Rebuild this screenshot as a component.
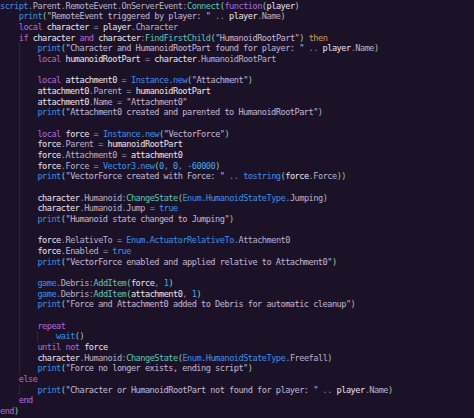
import React from "react";

const lines = [
  [0, 'script.Parent.RemoteEvent.OnServerEvent:Connect(function(player)'],
  [1, 'print("RemoteEvent triggered by player: " .. player.Name)'],
  [1, "local character = player.Character"],
  [1, 'if character and character:FindFirstChild("HumanoidRootPart") then'],
  [2, 'print("Character and HumanoidRootPart found for player: " .. player.Name)'],
  [2, "local humanoidRootPart = character.HumanoidRootPart"],
  [2, ""],
  [2, 'local attachment0 = Instance.new("Attachment")'],
  [2, "attachment0.Parent = humanoidRootPart"],
  [2, 'attachment0.Name = "Attachment0"'],
  [2, 'print("Attachment0 created and parented to HumanoidRootPart")'],
  [2, ""],
  [2, 'local force = Instance.new("VectorForce")'],
  [2, "force.Parent = humanoidRootPart"],
  [2, "force.Attachment0 = attachment0"],
  [2, "force.Force = Vector3.new(0, 0, -60000)"],
  [2, 'print("VectorForce created with Force: " .. tostring(force.Force))'],
  [2, ""],
  [2, "character.Humanoid:ChangeState(Enum.HumanoidStateType.Jumping)"],
  [2, "character.Humanoid.Jump = true"],
  [2, 'print("Humanoid state changed to Jumping")'],
  [2, ""],
  [2, "force.RelativeTo = Enum.ActuatorRelativeTo.Attachment0"],
  [2, "force.Enabled = true"],
  [2, 'print("VectorForce enabled and applied relative to Attachment0")'],
  [2, ""],
  [2, "game.Debris:AddItem(force, 1)"],
  [2, "game.Debris:AddItem(attachment0, 1)"],
  [2, 'print("Force and Attachment0 added to Debris for automatic cleanup")'],
  [2, ""],
  [2, "repeat"],
  [3, "wait()"],
  [2, "until not force"],
  [2, "character.Humanoid:ChangeState(Enum.HumanoidStateType.Freefall)"],
  [2, 'print("Force no longer exists, ending script")'],
  [1, "else"],
  [2, 'print("Character or HumanoidRootPart not found for player: " .. player.Name)'],
  [1, "end"],
  [0, "end)"],
];

const keywords = ["local", "if", "and", "repeat", "until", "not", "else", "end", "function"];
const builtins = [
  "print", "script", "Instance", "new", "Vector3", "Enum", "HumanoidStateType",
  "ActuatorRelativeTo", "game", "wait", "tostring", "true",
];

// tiny lua highlighter, good enough for this snippet
const tokenize = (text) => {
  const re = /("[^"]*")|(-?\d+)|([A-Za-z_][A-Za-z0-9_]*)|(\.\.)|(\s+)|(.)/g;
  const out = [];
  let prev = "";
  let m;
  while ((m = re.exec(text))) {
    const [tok, str, num, word, dots, space] = m;
    let cls = "text-[#8f88a0]";
    if (str) cls = "text-[#c3b7d6]";
    else if (num) cls = "text-[#4aa3ea]";
    else if (word) {
      if (word === "then") cls = "text-[#d29a58]";
      else if (keywords.includes(word)) cls = "text-[#b26ad9]";
      else if (builtins.includes(word)) cls = "text-[#3d8fe6]";
      else if (prev === ":") cls = "text-[#5ec4b6]";
      else if (prev === ".") cls = "text-[#b9b1cb]";
      else cls = "text-[#e8e4f0]";
    } else if (dots) cls = "text-[#8f88a0]";
    else if (space) cls = "";
    else if (tok === "(" || tok === ")") cls = "text-[#93cc9e]";
    out.push({ tok, cls });
    if (!space) prev = tok;
  }
  return out;
};

const CodeLine = ({ indent, text }) => (
  <div className="h-[10.68px] leading-[10.68px] whitespace-pre">
    {Array.from({ length: indent }).map((_, i) => (
      <span
        key={i}
        className={
          i >= 1
            ? "inline-block h-[10.68px] align-top shadow-[inset_1px_0_0_#30263f]"
            : "inline-block h-[10.68px] align-top"
        }
      >
        {"    "}
      </span>
    ))}
    {tokenize(text).map((t, i) => (
      <span key={i} className={t.cls}>
        {t.tok}
      </span>
    ))}
  </div>
);

const App = () => {
  return (
    <div className="w-[474px] h-[418px] overflow-hidden bg-[#1c1228] pt-[0.6px] font-['DejaVu_Sans_Mono',monospace] text-[8.6px] tracking-[-0.5px] text-[#e8e4f0]">
      {lines.map(([indent, text], i) => (
        <CodeLine key={i} indent={indent} text={text} />
      ))}
    </div>
  );
};

export default App;
